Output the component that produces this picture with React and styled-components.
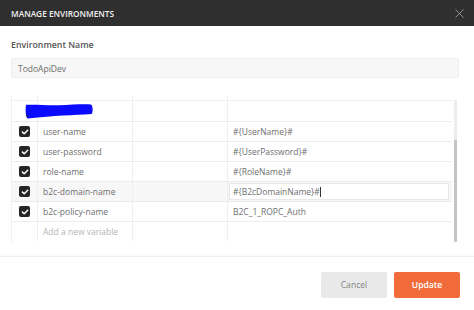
import React from "react";
import styled, { createGlobalStyle } from "styled-components";

const Global = createGlobalStyle`
  html, body { margin: 0; padding: 0; background: #fff; }
  body { font-family: "Open Sans", "Liberation Sans", sans-serif; }
  * { box-sizing: border-box; }
`;

const Modal = styled.div`
  width: 474px;
  height: 310px;
  background: #fff;
  display: flex;
  flex-direction: column;
  overflow: hidden;
`;

const Header = styled.div`
  height: 26px;
  flex: none;
  background: #2f2f2f;
  display: flex;
  align-items: center;
  justify-content: space-between;
  padding: 0 10px 0 11px;
`;

const Title = styled.div`
  color: #f2f2f2;
  font-size: 8.3px;
  font-weight: 600;
`;

const Close = styled.svg`
  width: 9px;
  height: 9px;
  display: block;
`;

const Body = styled.div`
  flex: 1;
  padding: 13px 17px 0 11px;
  display: flex;
  flex-direction: column;
`;

const Label = styled.div`
  font-size: 8.8px;
  font-weight: 600;
  color: #555;
  height: 12px;
  line-height: 12px;
`;

const NameInput = styled.div`
  margin-top: 7px;
  margin-right: -2px;
  height: 20px;
  background: #f7f7f7;
  border: 1px solid #efefef;
  border-radius: 2px;
  display: flex;
  align-items: center;
  padding-left: 6px;
  font-size: 8.5px;
  color: #6b6b6b;
`;

const ScrollArea = styled.div`
  margin-top: 18px;
  display: flex;
  gap: 2px;
  height: 146px;
`;

const Table = styled.div`
  flex: 1;
  display: flex;
  flex-direction: column;
  border-left: 1px solid #f0f0f0;
`;

const Row = styled.div`
  position: relative;
  display: grid;
  grid-template-columns: 26px 95px 95px 1fr;
  height: ${(p) => p.$h || 20}px;
  border-bottom: 1px solid ${(p) => (p.$last ? "transparent" : "#ececec")};
  background: ${(p) => (p.$active ? "#f7f7f7" : "transparent")};
  ${(p) =>
    p.$top
      ? "background-image: linear-gradient(#f1f1f1,#f1f1f1); background-size: 100% 1px; background-position: 0 4px; background-repeat: no-repeat;"
      : ""}
`;

const Cell = styled.div`
  display: flex;
  align-items: center;
  padding-left: ${(p) => (p.$pad ? 5 : 0)}px;
  border-right: 1px solid ${(p) => (p.$noline ? "transparent" : "#efefef")};
  justify-content: ${(p) => (p.$center ? "center" : "flex-start")};
  font-size: 8.5px;
  color: ${(p) => (p.$muted ? "#b5b5b5" : "#6e6e6e")};
  white-space: nowrap;
  overflow: hidden;
`;

const Redaction = styled.svg`
  position: absolute;
  left: 13px;
  top: 8px;
  width: 68px;
  height: 15px;
  display: block;
`;

const CheckBox = styled.div`
  width: 11px;
  height: 11px;
  border-radius: 2px;
  background: #262626;
  display: flex;
  align-items: center;
  justify-content: center;
`;

const ValueBox = styled.div`
  flex: 1;
  margin: 0 2px 0 1px;
  height: 17px;
  background: #fff;
  border: 1px solid #e8e8e8;
  display: flex;
  align-items: center;
  padding-left: 3px;
  color: #6e6e6e;
`;

const Caret = styled.span`
  display: inline-block;
  width: 1px;
  height: 10px;
  background: #333;
  margin-left: 0.5px;
`;

const Track = styled.div`
  width: 3px;
  margin-top: 4px;
  background: #ececec;
  display: flex;
  flex-direction: column;
  justify-content: flex-end;
`;

const Thumb = styled.div`
  height: 102px;
  background: #c4c4c4;
`;

const Footer = styled.div`
  flex: none;
  height: 54px;
  border-top: 1px solid #f1f1f1;
  box-shadow: 0 -1px 3px rgba(0, 0, 0, 0.03);
  display: flex;
  justify-content: flex-end;
  align-items: flex-start;
  gap: 7px;
  padding: 15px 14px 0 0;
`;

const Button = styled.button`
  width: 66px;
  height: 26px;
  border: none;
  border-radius: 2px;
  font-family: "Open Sans", "Liberation Sans", sans-serif;
  font-size: 8.6px;
  font-weight: ${(p) => (p.$primary ? 600 : 400)};
  background: ${(p) => (p.$primary ? "#f26b3a" : "#e9e9e9")};
  color: ${(p) => (p.$primary ? "#fff" : "#858585")};
  padding: 0;
`;

const Check = () => (
  <CheckBox>
    <svg width="8" height="8" viewBox="0 0 8 8">
      <path d="M1.4 4.1 L3.2 5.8 L6.7 2.2" fill="none" stroke="#fff" strokeWidth="1.5" strokeLinecap="round" strokeLinejoin="round" />
    </svg>
  </CheckBox>
);

const Scribble = () => (
  <Redaction viewBox="0 0 68 15">
    <path
      d="M1 0.8 C10 0.2 22 1.5 34 1.2 C46 0.8 56 0 66 0.4 C68 1.5 68.2 8.5 66.5 10 C58 10.5 48 11 38 11.6 C28 12.4 16 13.2 3 14.6 C0.6 14 0.2 6 1 0.8 Z"
      fill="#0a0aff"
    />
    <circle cx="2.2" cy="11.6" r="0.9" fill="#222" />
  </Redaction>
);

const rows = [
  ["user-name", "#{UserName}#"],
  ["user-password", "#{UserPassword}#"],
  ["role-name", "#{RoleName}#"],
  ["b2c-domain-name", "#{B2cDomainName}#", true],
  ["b2c-policy-name", "B2C_1_ROPC_Auth"],
];

export default function App() {
  return (
    <>
      <Global />
      <Modal>
        <Header>
          <Title>MANAGE ENVIRONMENTS</Title>
          <Close viewBox="0 0 9 9">
            <path d="M0.5 0.5 L8.5 8.5 M8.5 0.5 L0.5 8.5" stroke="#9a9a9a" strokeWidth="0.9" />
          </Close>
        </Header>
        <Body>
          <Label>Environment Name</Label>
          <NameInput>TodoApiDev</NameInput>
          <ScrollArea>
            <Table>
              <Row $h={26} $top>
                <Cell />
                <Cell />
                <Cell />
                <Cell $noline />
                <Scribble />
              </Row>
              {rows.map(([k, v, active]) => (
                <Row key={k} $active={active}>
                  <Cell $center>
                    <Check />
                  </Cell>
                  <Cell $pad>{k}</Cell>
                  <Cell />
                  <Cell $noline $pad={!active}>
                    {active ? (
                      <ValueBox>
                        {v}
                        <Caret />
                      </ValueBox>
                    ) : (
                      v
                    )}
                  </Cell>
                </Row>
              ))}
              <Row $last>
                <Cell />
                <Cell $pad $muted>Add a new variable</Cell>
                <Cell />
                <Cell $noline />
              </Row>
            </Table>
            <Track>
              <Thumb />
            </Track>
          </ScrollArea>
        </Body>
        <Footer>
          <Button>Cancel</Button>
          <Button $primary>Update</Button>
        </Footer>
      </Modal>
    </>
  );
}
